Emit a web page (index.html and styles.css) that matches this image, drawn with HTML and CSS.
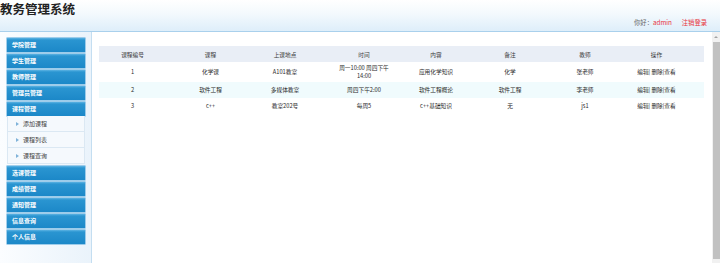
FILE: index.html
```html
<!DOCTYPE html>
<html lang="zh">
<head>
<meta charset="utf-8">
<title>教务管理系统</title>
<link rel="stylesheet" href="styles.css">
</head>
<body>
<header class="top">
  <h1 class="logo">教务管理系统</h1>
  <div class="user">你好：<span class="name">admin</span><a class="logout">注销登录</a></div>
</header>
<div class="main">
  <nav class="side">
    <div class="menu">学院管理</div>
    <div class="menu">学生管理</div>
    <div class="menu">教师管理</div>
    <div class="menu">管理员管理</div>
    <div class="menu">课程管理</div>
    <div class="sub"><span class="arr"></span>添加课程</div>
    <div class="sub"><span class="arr"></span>课程列表</div>
    <div class="sub last"><span class="arr"></span>课程查询</div>
    <div class="menu">选课管理</div>
    <div class="menu">成绩管理</div>
    <div class="menu">通知管理</div>
    <div class="menu">信息查询</div>
    <div class="menu">个人信息</div>
  </nav>
  <section class="content">
    <table class="grid">
      <colgroup>
        <col class="c1"><col class="c2"><col class="c3"><col class="c4">
        <col class="c5"><col class="c6"><col class="c7"><col class="c8">
      </colgroup>
      <thead>
        <tr><th>课程编号</th><th>课程</th><th>上课地点</th><th>时间</th><th>内容</th><th>备注</th><th>教师</th><th>操作</th></tr>
      </thead>
      <tbody>
        <tr class="tall"><td>1</td><td>化学课</td><td>A101教室</td><td>周一10:00 周四下午<br>14:00</td><td>应用化学知识</td><td>化学</td><td>张老师</td><td>编辑| 删除|查看</td></tr>
        <tr class="alt"><td>2</td><td>软件工程</td><td>多媒体教室</td><td>周四下午2:00</td><td>软件工程概论</td><td>软件工程</td><td>李老师</td><td>编辑| 删除|查看</td></tr>
        <tr><td>3</td><td>c++</td><td>教室202号</td><td>每周5</td><td>c++基础知识</td><td>无</td><td>js1</td><td>编辑| 删除|查看</td></tr>
      </tbody>
    </table>
  </section>
  <div class="scroll">
    <div class="up"></div>
    <div class="thumb"></div>
  </div>
</div>
</body>
</html>
```

FILE: styles.css
```css
html, body {
  margin: 0;
  padding: 0;
  height: 100%;
  overflow: hidden;
  background: #fff;
  font-family: "Noto Sans CJK SC", "Noto Sans", sans-serif;
}
.top {
  height: 31px;
  border-bottom: 1px solid #a9d0ec;
  background: linear-gradient(#ffffff 0%, #f3f9fd 45%, #deeefa 100%);
  display: flex;
  justify-content: space-between;
  align-items: flex-start;
}
.logo {
  margin: 1px 0 0 0;
  font-size: 12.5px;
  line-height: 16px;
  font-weight: bold;
  color: #222;
}
.user {
  align-self: flex-end;
  margin: 0 13px 3px 0;
  font-size: 6.3px;
  line-height: 10px;
  color: #666;
}
.user .name {
  color: #e8313a;
  margin-right: 10px;
}
.user .logout {
  color: #e8313a;
}
.main {
  display: flex;
  height: 231px;
}
.side {
  width: 92px;
  border-right: 1px solid #c4def1;
  background: linear-gradient(to right, #fbfdff, #eaf3fb);
  padding-top: 6px;
  box-sizing: border-box;
  flex: none;
}
.menu {
  margin: 0 6px 2px 7px;
  height: 14px;
  line-height: 14px;
  padding-left: 5px;
  font-size: 6px;
  font-weight: bold;
  color: #fff;
  background: linear-gradient(#5cb3e3 0, #2a95d1 2px, #1c88c8 100%);
  box-shadow: 0 0 0 0.5px #4aa3d8;
}
.sub {
  margin: -2px 6px 2px 7px;
  height: 16px;
  line-height: 16px;
  font-size: 6px;
  color: #444;
  background: #f5f9fd;
  border: 1px solid #dbe8f3;
  border-top: none;
  box-sizing: border-box;
  padding-left: 8px;
  display: flex;
  align-items: center;
}
.sub.last {
  margin-bottom: 2px;
}
.arr {
  width: 0;
  height: 0;
  border-left: 3px solid #7fb2d9;
  border-top: 2px solid transparent;
  border-bottom: 2px solid transparent;
  margin-right: 4px;
}
.content {
  flex: 1;
  padding: 14px 7px 0 7px;
}
.grid {
  width: 605px;
  border-collapse: collapse;
  table-layout: fixed;
  font-size: 5.7px;
  color: #2b2b2b;
}
.c1 { width: 67px; }
.c2 { width: 89px; }
.c3 { width: 60px; }
.c4 { width: 98px; }
.c5 { width: 46px; }
.c6 { width: 102px; }
.c7 { width: 48px; }
.c8 { width: 95px; }
.grid th {
  background: #e9eef6;
  height: 16px;
  font-weight: normal;
  color: #3a3a3a;
  text-align: center;
  padding: 0;
}
.grid td {
  height: 16px;
  text-align: center;
  padding: 0;
  line-height: 8.5px;
}
.grid tr.tall td {
  height: 20px;
}
.grid tr.alt td {
  background: #f0fbfd;
}
.scroll {
  width: 8px;
  flex: none;
  background: #f1f1f1;
  display: flex;
  flex-direction: column;
  align-items: center;
}
.up {
  margin-top: 4px;
  width: 0;
  height: 0;
  border-bottom: 2px solid #a3a3a3;
  border-left: 2px solid transparent;
  border-right: 2px solid transparent;
}
.thumb {
  margin-top: 4px;
  width: 7px;
  flex: 1;
  margin-bottom: 4px;
  background: #c1c1c1;
}
```
